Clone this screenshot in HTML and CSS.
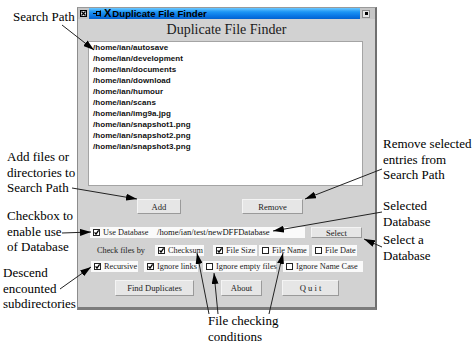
FILE: index.html
```html
<!DOCTYPE html>
<html>
<head>
<meta charset="utf-8">
<title>Duplicate File Finder</title>
<link rel="stylesheet" href="styles.css">
</head>
<body>
<div class="canvas">
  <div class="window">
    <div class="titlebar">
      <span class="tb-btn tb-close"><svg width="7" height="7" viewBox="0 0 7 7"><rect x="0.5" y="0.5" width="6" height="6" fill="#e8e8e8" stroke="#000"/><path d="M1.5 1.5 L5.5 5.5 M5.5 1.5 L1.5 5.5" stroke="#000" stroke-width="1.2"/></svg></span>
      <span class="tb-bar">
        <svg class="pin" width="9" height="7" viewBox="0 0 9 7"><path d="M0 3.5 H3.5" stroke="#000"/><rect x="3.5" y="1.5" width="3.5" height="4" fill="none" stroke="#000"/><path d="M7.5 0.5 V6.5" stroke="#000"/></svg>
        <span class="tb-x">X</span><span class="tb-text">Duplicate File Finder</span>
      </span>
      <span class="tb-btn tb-max"><span class="tb-dot"></span></span>
    </div>
    <div class="heading">Duplicate File Finder</div>
    <div class="list">
      <div class="item">/home/ian/autosave</div>
      <div class="item">/home/ian/development</div>
      <div class="item">/home/ian/documents</div>
      <div class="item">/home/ian/download</div>
      <div class="item">/home/ian/humour</div>
      <div class="item">/home/ian/scans</div>
      <div class="item">/home/ian/img9a.jpg</div>
      <div class="item">/home/ian/snapshot1.png</div>
      <div class="item">/home/ian/snapshot2.png</div>
      <div class="item">/home/ian/snapshot3.png</div>
    </div>
    <div class="row row-addrem">
      <button class="btn btn-add">Add</button>
      <button class="btn btn-remove">Remove</button>
    </div>
    <div class="row row-db">
      <span class="chk c-usedb"><svg class="box" width="7" height="7" viewBox="0 0 7 7"><rect x="0.5" y="0.5" width="6" height="6" fill="#fff" stroke="#222"/><path d="M1.6 3.4 L3 5.2 L5.6 1.4" fill="none" stroke="#000" stroke-width="1.3"/></svg>Use Database</span>
      <span class="entry">/home/ian/test/newDFFDatabase</span>
      <button class="btn btn-select">Select</button>
    </div>
    <div class="row row-check">
      <span class="lbl">Check files by</span>
      <span class="chk c-checksum"><svg class="box" width="7" height="7" viewBox="0 0 7 7"><rect x="0.5" y="0.5" width="6" height="6" fill="#fff" stroke="#222"/><path d="M1.6 3.4 L3 5.2 L5.6 1.4" fill="none" stroke="#000" stroke-width="1.3"/></svg>Checksum</span>
      <span class="chk c-size"><svg class="box" width="7" height="7" viewBox="0 0 7 7"><rect x="0.5" y="0.5" width="6" height="6" fill="#fff" stroke="#222"/><path d="M1.6 3.4 L3 5.2 L5.6 1.4" fill="none" stroke="#000" stroke-width="1.3"/></svg>File Size</span>
      <span class="chk c-name"><svg class="box" width="7" height="7" viewBox="0 0 7 7"><rect x="0.5" y="0.5" width="6" height="6" fill="#fff" stroke="#222"/></svg>File Name</span>
      <span class="chk c-date"><svg class="box" width="7" height="7" viewBox="0 0 7 7"><rect x="0.5" y="0.5" width="6" height="6" fill="#fff" stroke="#222"/></svg>File Date</span>
    </div>
    <div class="row row-opts">
      <span class="chk c-rec"><svg class="box" width="7" height="7" viewBox="0 0 7 7"><rect x="0.5" y="0.5" width="6" height="6" fill="#fff" stroke="#222"/><path d="M1.6 3.4 L3 5.2 L5.6 1.4" fill="none" stroke="#000" stroke-width="1.3"/></svg>Recursive</span>
      <span class="chk c-links"><svg class="box" width="7" height="7" viewBox="0 0 7 7"><rect x="0.5" y="0.5" width="6" height="6" fill="#fff" stroke="#222"/><path d="M1.6 3.4 L3 5.2 L5.6 1.4" fill="none" stroke="#000" stroke-width="1.3"/></svg>Ignore links</span>
      <span class="chk c-empty"><svg class="box" width="7" height="7" viewBox="0 0 7 7"><rect x="0.5" y="0.5" width="6" height="6" fill="#fff" stroke="#222"/></svg>Ignore empty files</span>
      <span class="chk c-case"><svg class="box" width="7" height="7" viewBox="0 0 7 7"><rect x="0.5" y="0.5" width="6" height="6" fill="#fff" stroke="#222"/></svg>Ignore Name Case</span>
    </div>
    <div class="row row-buttons">
      <button class="btn btn-find">Find Duplicates</button>
      <button class="btn btn-about">About</button>
      <button class="btn btn-quit">Q u i t</button>
    </div>
  </div>

  <div class="note n-search">Search Path</div>
  <div class="note n-add">Add files or<br>directories to<br>Search Path</div>
  <div class="note n-checkbox">Checkbox to<br>enable use<br>of Database</div>
  <div class="note n-descend">Descend<br>encounted<br>subdirectories</div>
  <div class="note n-remove">Remove selected<br>entries from<br>Search Path</div>
  <div class="note n-selected">Selected<br>Database</div>
  <div class="note n-select">Select a<br>Database</div>
  <div class="note n-file">File checking<br>conditions</div>

  <svg class="arrows" width="474" height="346" viewBox="0 0 474 346">
    <defs>
      <marker id="ah" viewBox="0 0 11 7" refX="11" refY="3.5" markerWidth="11" markerHeight="7" markerUnits="userSpaceOnUse" orient="auto">
        <path d="M0 0 L11 3.5 L0 7 Z" fill="#000"/>
      </marker>
    </defs>
    <g stroke="#222" stroke-width="1" fill="none" marker-end="url(#ah)">
      <line x1="62" y1="25" x2="94" y2="50"/>
      <line x1="72" y1="188" x2="137" y2="199"/>
      <line x1="382" y1="169" x2="305" y2="199"/>
      <line x1="62" y1="233" x2="91" y2="232"/>
      <line x1="382" y1="212" x2="273" y2="231"/>
      <line x1="382" y1="247" x2="364" y2="239"/>
      <line x1="60" y1="289" x2="91" y2="267"/>
      <line x1="209" y1="314" x2="197" y2="253"/>
      <line x1="218" y1="314" x2="214" y2="273"/>
      <line x1="269" y1="314" x2="283" y2="253"/>
    </g>
  </svg>
</div>
</body>
</html>
```

FILE: styles.css
```css
* {
  box-sizing: border-box;
}

html,
body {
  margin: 0;
  padding: 0;
  background: #ffffff;
}

.canvas {
  position: relative;
  width: 474px;
  height: 346px;
  overflow: hidden;
  background: #ffffff;
  padding: 7px 0 0 77px;
  font-family: "Liberation Serif", "Times New Roman", serif;
  color: #000;
}

/* ---------- window ---------- */
.window {
  width: 300px;
  height: 303px;
  display: flex;
  flex-direction: column;
  background: #d2d2d2;
  border-left: 1px solid #8c8c8c;
  border-top: 1px solid #9a9a9a;
  border-right: 2px solid #6f6f6f;
  border-bottom: 3px solid #7c7c7c;
}

.titlebar {
  height: 11px;
  display: flex;
  background: #c6c6c6;
  padding-right: 3px;
}

.tb-btn {
  display: flex;
  align-items: center;
  background: #c6c6c6;
}

.tb-close {
  width: 11px;
  padding-left: 2px;
}

.tb-max {
  width: 12px;
  justify-content: center;
}

.tb-dot {
  width: 8px;
  height: 8px;
  border: 1px solid #8a8a8a;
  background: #e6e6e6;
  display: flex;
  align-items: center;
  justify-content: center;
}

.tb-dot::after {
  content: "";
  width: 3px;
  height: 3px;
  background: #000;
}

.tb-bar {
  flex: 1;
  display: flex;
  align-items: center;
  padding-left: 4px;
  background: linear-gradient(#6cc8ff 0%, #1e96f5 35%, #0a78e6 70%, #0462d0 100%);
  font-family: "Liberation Sans", Arial, sans-serif;
  font-weight: bold;
  font-size: 9.6px;
  line-height: 11px;
  color: #000;
}

.pin {
  margin-right: 2px;
}

.tb-x {
  font-size: 11px;
  margin-right: 1px;
}

.heading {
  height: 22px;
  line-height: 22px;
  text-align: center;
  font-size: 14px;
  font-family: "Liberation Serif", "Times New Roman", serif;
  color: #1a1a1a;
}

.list {
  height: 145px;
  margin: 0 12px 0 10px;
  border: 1px solid #a4a4a4;
  background: #ffffff;
  padding-left: 4px;
}

.item {
  font-family: "Liberation Sans", Arial, sans-serif;
  font-weight: bold;
  font-size: 8px;
  line-height: 11px;
  letter-spacing: 0.05px;
  color: #111;
  white-space: nowrap;
}

/* ---------- rows ---------- */
.row {
  display: flex;
  align-items: stretch;
  font-size: 8.3px;
  line-height: 11px;
}

.btn {
  margin: 0;
  padding: 0;
  font-family: "Liberation Serif", "Times New Roman", serif;
  font-size: 8.6px;
  color: #222;
  background: #e6e6e6;
  border: 1px solid;
  border-color: #f4f4f4 #9a9a9a #9a9a9a #f4f4f4;
  text-align: center;
}

.row-addrem {
  margin-top: 13px;
  height: 15px;
  padding-left: 59px;
  gap: 61px;
}

.btn-add { width: 44px; }
.btn-remove { width: 61px; }

.row-db {
  margin-top: 13px;
  height: 11px;
  padding-left: 12px;
}

.chk {
  display: flex;
  align-items: center;
  gap: 3px;
  padding-left: 3px;
  background: #fafafa;
  color: #222;
  white-space: nowrap;
}

.box {
  flex: none;
}

.c-usedb { width: 62px; }

.entry {
  width: 153px;
  background: #fafafa;
  padding-left: 5px;
  font-size: 8.6px;
  color: #111;
  white-space: nowrap;
}

.btn-select {
  width: 51px;
  margin-left: 6px;
}

.row-check {
  margin-top: 7px;
  height: 11px;
}

.lbl {
  width: 58px;
  margin-left: 19px;
  color: #222;
  white-space: nowrap;
}

.c-checksum { width: 49px; }
.c-size { width: 44px; margin-left: 9px; }
.c-name { width: 50px; margin-left: 2px; }
.c-date { width: 45px; margin-left: 3px; }

.row-opts {
  margin-top: 5px;
  height: 11px;
}

.c-rec { width: 47px; margin-left: 13px; }
.c-links { width: 54px; margin-left: 6px; }
.c-empty { width: 73px; margin-left: 5px; }
.c-case { width: 80px; margin-left: 7px; }

.row-buttons {
  margin-top: 8px;
  height: 16px;
}

.btn-find { width: 79px; margin-left: 37px; }
.btn-about { width: 41px; margin-left: 27px; }
.btn-quit { width: 57px; margin-left: 20px; }

/* ---------- annotations ---------- */
.note {
  position: absolute;
  font-family: "Liberation Serif", "Times New Roman", serif;
  font-size: 13px;
  line-height: 15.5px;
  color: #000;
  white-space: nowrap;
}

.n-search { left: 13px; top: 9px; }
.n-add { left: 7px; top: 149px; }
.n-checkbox { left: 7px; top: 208px; }
.n-descend { left: 3px; top: 265px; }
.n-remove { left: 383px; top: 136px; }
.n-selected { left: 383px; top: 198px; }
.n-select { left: 383px; top: 232px; }
.n-file { left: 208px; top: 313px; }

.arrows {
  position: absolute;
  left: 0;
  top: 0;
  pointer-events: none;
}
```
